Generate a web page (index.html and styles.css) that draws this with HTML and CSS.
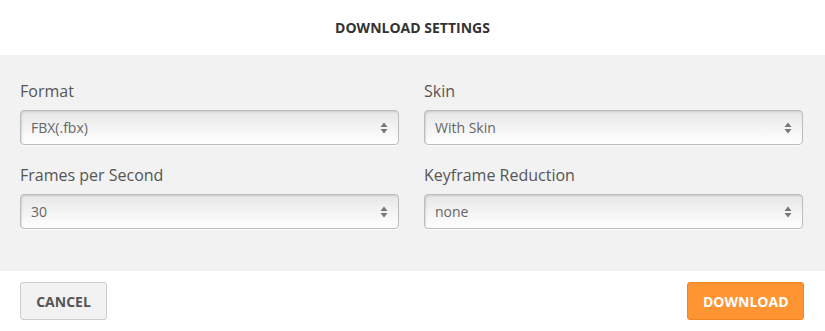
FILE: index.html
```html
<!DOCTYPE html>
<html lang="en">
<head>
    <meta charset="UTF-8">
    <title>Download Settings</title>
    <link rel="stylesheet" href="styles.css">
</head>
<body>
    <div class="dialog">
        <div class="dialog-header">DOWNLOAD SETTINGS</div>

        <div class="dialog-body">
            <div class="field">
                <label class="field-label">Format</label>
                <div class="select-wrap">
                    <select>
                        <option>FBX(.fbx)</option>
                    </select>
                    <svg class="select-arrows" width="8" height="12" viewBox="0 0 8 12"><path d="M4 0.5 L7.5 5 L0.5 5 Z M0.5 7 L7.5 7 L4 11.5 Z" fill="#777"/></svg>
                </div>
            </div>
            <div class="field">
                <label class="field-label">Skin</label>
                <div class="select-wrap">
                    <select>
                        <option>With Skin</option>
                    </select>
                    <svg class="select-arrows" width="8" height="12" viewBox="0 0 8 12"><path d="M4 0.5 L7.5 5 L0.5 5 Z M0.5 7 L7.5 7 L4 11.5 Z" fill="#777"/></svg>
                </div>
            </div>
            <div class="field">
                <label class="field-label">Frames per Second</label>
                <div class="select-wrap">
                    <select>
                        <option>30</option>
                    </select>
                    <svg class="select-arrows" width="8" height="12" viewBox="0 0 8 12"><path d="M4 0.5 L7.5 5 L0.5 5 Z M0.5 7 L7.5 7 L4 11.5 Z" fill="#777"/></svg>
                </div>
            </div>
            <div class="field">
                <label class="field-label">Keyframe Reduction</label>
                <div class="select-wrap">
                    <select>
                        <option>none</option>
                    </select>
                    <svg class="select-arrows" width="8" height="12" viewBox="0 0 8 12"><path d="M4 0.5 L7.5 5 L0.5 5 Z M0.5 7 L7.5 7 L4 11.5 Z" fill="#777"/></svg>
                </div>
            </div>
        </div>

        <div class="dialog-footer">
            <button type="button" class="btn btn-cancel">CANCEL</button>
            <button type="button" class="btn btn-download">DOWNLOAD</button>
        </div>
    </div>
</body>
</html>
```

FILE: styles.css
```css
* {
    box-sizing: border-box;
    margin: 0;
    padding: 0;
}

body {
    font-family: "Open Sans", "Noto Sans", sans-serif;
    background: white;
    width: 825px;
    height: 331px;
    overflow: hidden;
}

.dialog-header {
    height: 55px;
    display: flex;
    align-items: center;
    justify-content: center;
    font-size: 14px;
    font-weight: bold;
    color: #333;
    padding-bottom: 1px;
}

.dialog-body {
    background: #f2f2f2;
    height: 216px;
    padding: 26px 22px 0 20px;
    display: grid;
    grid-template-columns: 1fr 1fr;
    column-gap: 25px;
    row-gap: 20px;
    align-content: start;
}

.field-label {
    display: block;
    font-size: 16px;
    line-height: 20px;
    color: #555;
    margin-bottom: 9px;
}

.select-wrap {
    position: relative;
}

select {
    appearance: none;
    -webkit-appearance: none;
    width: 100%;
    height: 35px;
    padding: 0 30px 0 10px;
    border: 1px solid #bbb;
    border-radius: 4px;
    background: linear-gradient(to bottom, #e6e6e6 0%, #f3f3f3 50%, #ffffff 100%);
    box-shadow: inset 1px 1px 2px rgba(0,0,0,0.12), 0 1px 0 rgba(255,255,255,0.8);
    font-family: inherit;
    font-size: 14px;
    color: #666;
}

.select-arrows {
    position: absolute;
    right: 11px;
    top: 12px;
    pointer-events: none;
}

.dialog-footer {
    height: 60px;
    display: flex;
    align-items: center;
    justify-content: space-between;
    padding: 0 21px 0 20px;
}

.btn {
    height: 38px;
    padding: 0 15px;
    border-radius: 3px;
    font-family: inherit;
    font-size: 14px;
    font-weight: bold;
    cursor: pointer;
}

.btn-cancel {
    width: 87px;
    background: #f2f2f2;
    border: 1px solid #ccc;
    color: #555;
}

.btn-download {
    width: 117px;
    background: #ff9433;
    border: 1px solid #f0841f;
    color: white;
}
```
